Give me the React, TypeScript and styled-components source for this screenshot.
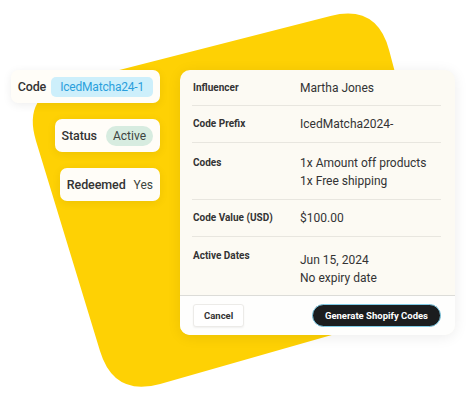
import React from 'react';
import styled, { createGlobalStyle } from 'styled-components';

const GlobalStyle = createGlobalStyle`
  html, body {
    margin: 0;
    padding: 0;
    background: #fff;
  }
  body {
    font-family: Roboto, "Liberation Sans", sans-serif;
    color: #303030;
  }
`;

const Stage = styled.div`
  position: relative;
  width: 474px;
  height: 400px;
  overflow: hidden;
  background: #fff;
`;

const Blob = styled.svg`
  position: absolute;
  left: 0;
  top: 0;
  z-index: 0;
`;

const Layout = styled.div`
  position: relative;
  z-index: 1;
  display: flex;
  align-items: flex-start;
  gap: 20px;
  padding: 70px 0 0 0;
`;

const ChipColumn = styled.div`
  width: 160px;
  flex-shrink: 0;
  display: flex;
  flex-direction: column;
  align-items: flex-end;
  gap: 16px;
`;

const Chip = styled.div<{ $gap: number }>`
  display: flex;
  align-items: center;
  gap: ${(p) => p.$gap}px;
  height: 33px;
  padding: 0 7px;
  background: #fffdf8;
  border-radius: 7px;
  box-shadow: 0 2px 10px rgba(0, 0, 0, 0.07);
  font-size: 12.5px;
  white-space: nowrap;
`;

const ChipLabel = styled.span`
  font-weight: 500;
  color: #333;
  letter-spacing: -0.1px;
`;

const Badge = styled.span<{ $tone: 'blue' | 'green' | 'plain' }>`
  display: inline-flex;
  align-items: center;
  height: 20px;
  font-size: 12px;
  letter-spacing: ${(p) => (p.$tone === 'blue' ? '-0.2px' : '0')};
  padding: 0 ${(p) => (p.$tone === 'plain' ? '0' : p.$tone === 'blue' ? '9px' : '7px')};
  border-radius: ${(p) => (p.$tone === 'green' ? '10px' : '5px')};
  background: ${(p) =>
    p.$tone === 'blue' ? '#cdeffb' : p.$tone === 'green' ? '#d7ece0' : 'transparent'};
  color: ${(p) => (p.$tone === 'blue' ? '#2b9fdc' : '#3c4540')};
`;

const Card = styled.div`
  width: 275px;
  flex-shrink: 0;
  background: #fcfaf3;
  border-radius: 10px;
  box-shadow: 0 2px 14px rgba(0, 0, 0, 0.08);
  overflow: hidden;
`;

const Body = styled.div`
  padding: 0 14px 0 12px;
`;

const Row = styled.div<{ $pt: number; $pb: number; $last?: boolean }>`
  display: grid;
  grid-template-columns: 107px 1fr;
  padding: ${(p) => p.$pt}px 0 ${(p) => p.$pb}px 1px;
  border-bottom: ${(p) => (p.$last ? 'none' : '1px solid #e8e6df')};
`;

const Label = styled.div`
  font-size: 10px;
  font-weight: 700;
  color: #333;
  line-height: 18px;
`;

const Value = styled.div<{ $drop?: number }>`
  font-size: 12px;
  line-height: 18px;
  color: #333;
  padding-top: ${(p) => p.$drop ?? 0}px;
`;

const Footer = styled.div`
  display: flex;
  justify-content: space-between;
  align-items: center;
  padding: 8px 14px 8px 13px;
  background: #fefefd;
  border-top: 1px solid #dcdcd8;
`;

const Button = styled.button<{ $primary?: boolean }>`
  height: 23px;
  padding: 0 ${(p) => (p.$primary ? '12px' : '10px')};
  font-family: inherit;
  font-size: 9.5px;
  font-weight: 700;
  cursor: pointer;
  border-radius: ${(p) => (p.$primary ? '12px' : '3px')};
  background: ${(p) => (p.$primary ? '#1b1d1f' : '#fff')};
  color: ${(p) => (p.$primary ? '#fff' : '#333')};
  border: 1px solid ${(p) => (p.$primary ? '#7fcbe6' : '#ecebe8')};
  box-shadow: ${(p) => (p.$primary ? 'none' : '0 1px 2px rgba(0,0,0,0.06)')};
`;

type Pt = [number, number];

const roundedPath = (pts: Pt[], r: number) => {
  const n = pts.length;
  const along = (a: Pt, b: Pt, d: number): Pt => {
    const dx = b[0] - a[0];
    const dy = b[1] - a[1];
    const len = Math.hypot(dx, dy);
    return [a[0] + (dx / len) * d, a[1] + (dy / len) * d];
  };
  let d = '';
  pts.forEach((v, i) => {
    const prev = pts[(i - 1 + n) % n];
    const next = pts[(i + 1) % n];
    const a = along(v, prev, r);
    const b = along(v, next, r);
    d += `${i === 0 ? 'M' : 'L'}${a[0].toFixed(1)},${a[1].toFixed(1)} Q${v[0]},${v[1]} ${b[0].toFixed(1)},${b[1].toFixed(1)} `;
  });
  return d + 'Z';
};

const blob = roundedPath(
  [
    [22, 95],
    [377, 4],
    [455, 300],
    [114, 397],
  ],
  48
);

const rows = [
  { label: 'Influencer', values: ['Martha Jones'], pt: 9, pb: 8 },
  { label: 'Code Prefix', values: ['IcedMatcha2024-'], pt: 9, pb: 9 },
  { label: 'Codes', values: ['1x Amount off products', '1x Free shipping'], pt: 11, pb: 9 },
  { label: 'Code Value (USD)', values: ['$100.00'], pt: 9, pb: 9 },
  { label: 'Active Dates', values: ['Jun 15, 2024', 'No expiry date'], pt: 10, pb: 8, drop: 4 },
];

export default function App() {
  return (
    <Stage>
      <GlobalStyle />
      <Blob width="474" height="400" viewBox="0 0 474 400">
        <path d={blob} fill="#fed104" />
      </Blob>
      <Layout>
        <ChipColumn>
          <Chip $gap={5}>
            <ChipLabel>Code</ChipLabel>
            <Badge $tone="blue">IcedMatcha24-1</Badge>
          </Chip>
          <Chip $gap={9}>
            <ChipLabel>Status</ChipLabel>
            <Badge $tone="green">Active</Badge>
          </Chip>
          <Chip $gap={8}>
            <ChipLabel>Redeemed</ChipLabel>
            <Badge $tone="plain">Yes</Badge>
          </Chip>
        </ChipColumn>
        <Card>
          <Body>
            {rows.map((row, i) => (
              <Row key={row.label} $pt={row.pt} $pb={row.pb} $last={i === rows.length - 1}>
                <Label>{row.label}</Label>
                <Value $drop={row.drop}>
                  {row.values.map((v) => (
                    <div key={v}>{v}</div>
                  ))}
                </Value>
              </Row>
            ))}
          </Body>
          <Footer>
            <Button>Cancel</Button>
            <Button $primary>Generate Shopify Codes</Button>
          </Footer>
        </Card>
      </Layout>
    </Stage>
  );
}
